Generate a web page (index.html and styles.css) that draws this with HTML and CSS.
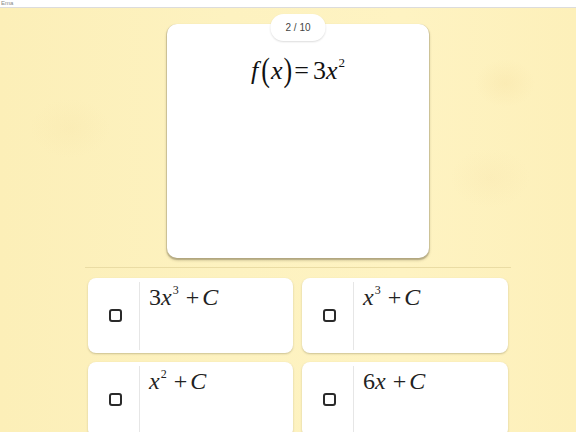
FILE: index.html
```html
<!DOCTYPE html>
<html>
<head>
<meta charset="utf-8">
<link rel="stylesheet" href="styles.css">
</head>
<body>
<div class="topbar"><span class="topbar-text">Ema</span></div>
<main class="stage">
  <div class="wrap">
    <section class="question">
      <div class="counter">2 / 10</div>
      <div class="formula"><i class="ff">f</i><span class="paren">(</span><i>x</i><span class="paren">)</span><span class="eq">=</span>3<i>x</i><sup class="sup2">2</sup></div>
    </section>
    <hr class="sep">
    <div class="options">
      <div class="option">
        <div class="check"><span class="box"></span></div>
        <div class="answer">3<i>x</i><sup>3</sup><span class="op">+</span><i>C</i></div>
      </div>
      <div class="option">
        <div class="check"><span class="box"></span></div>
        <div class="answer"><i>x</i><sup>3</sup><span class="op">+</span><i>C</i></div>
      </div>
      <div class="option">
        <div class="check"><span class="box"></span></div>
        <div class="answer"><i>x</i><sup>2</sup><span class="op">+</span><i>C</i></div>
      </div>
      <div class="option">
        <div class="check"><span class="box"></span></div>
        <div class="answer">6<i>x</i><span class="op">+</span><i>C</i></div>
      </div>
    </div>
  </div>
</main>
</body>
</html>
```

FILE: styles.css
```css
html, body {
  margin: 0;
  padding: 0;
  height: 100%;
  overflow: hidden;
}
body {
  font-family: "Liberation Sans", Arial, sans-serif;
  background: #fdf1bd;
}
.topbar {
  height: 7px;
  background: #ffffff;
  border-bottom: 1px solid #dcdcdc;
  overflow: hidden;
}
.topbar-text {
  display: block;
  font-size: 6px;
  line-height: 6px;
  color: #888;
  padding-left: 1px;
}
.stage {
  min-height: 430px;
  padding: 16px 0 0 20px;
  background:
    radial-gradient(ellipse 30px 24px at 505px 75px, rgba(240, 210, 140, 0.18), transparent),
    radial-gradient(ellipse 40px 30px at 70px 120px, rgba(240, 215, 150, 0.12), transparent),
    radial-gradient(ellipse 40px 30px at 490px 170px, rgba(240, 210, 150, 0.12), transparent),
    linear-gradient(90deg, #fcefb8 0%, #fdf2c0 40%, #fef3c2 70%, #fdf0ba 100%);
}
.wrap {
  width: 426px;
  margin: 0 auto;
}
.question {
  position: relative;
  width: 262px;
  height: 234px;
  margin: 0 auto;
  background: #ffffff;
  border-radius: 10px;
  box-shadow: 0 1px 0 1px rgba(120, 110, 80, 0.22), 0 2px 3px rgba(60, 50, 20, 0.35);
  box-sizing: border-box;
  padding-top: 31px;
  text-align: center;
}
.counter {
  position: absolute;
  top: -10px;
  left: 50%;
  transform: translateX(-50%);
  width: 55px;
  height: 27px;
  line-height: 27px;
  border-radius: 13px;
  background: #ffffff;
  box-shadow: 0 1px 2px rgba(0, 0, 0, 0.14);
  font-size: 10px;
  color: #444;
  text-align: center;
}
.formula {
  font-family: "Liberation Serif", "Times New Roman", serif;
  font-size: 26px;
  line-height: 32px;
  color: #111;
  padding-left: 0;
}
.formula i {
  font-style: italic;
}
.ff {
  margin-right: 2px;
}
.paren {
  display: inline-block;
  transform: scaleY(1.3);
  margin: 0 1px;
}
.eq {
  margin: 0 4px 0 1px;
}
.sup2 {
  font-size: 13px;
  line-height: 0;
  position: relative;
  top: -12px;
  vertical-align: baseline;
  margin-left: 1px;
}
.sep {
  border: 0;
  border-top: 1px solid #eadca4;
  margin: 9px 0 10px 0;
  height: 0;
}
.options {
  display: grid;
  grid-template-columns: 205px 206px;
  column-gap: 9px;
  row-gap: 9px;
  padding: 0 3px;
}
.option {
  display: flex;
  height: 75px;
  background: #ffffff;
  border-radius: 8px;
  box-shadow: 0 1px 2px rgba(90, 80, 40, 0.3);
}
.check {
  width: 51px;
  display: flex;
  align-items: center;
  justify-content: center;
  box-sizing: border-box;
  padding-left: 4px;
}
.box {
  display: block;
  width: 9px;
  height: 9px;
  border: 2px solid #2a2a2a;
  border-radius: 3px;
}
.answer {
  flex: 1;
  margin: 4px 0 3px 0;
  border-left: 1px solid #e6e6e6;
  padding: 1px 0 0 9px;
  font-family: "Liberation Serif", "Times New Roman", serif;
  font-size: 24px;
  line-height: 28px;
  color: #222;
}
.answer sup {
  font-size: 12px;
  line-height: 0;
  position: relative;
  top: -11px;
  vertical-align: baseline;
  margin-left: 1px;
}
.op {
  margin: 0 3px 0 7px;
}
```
